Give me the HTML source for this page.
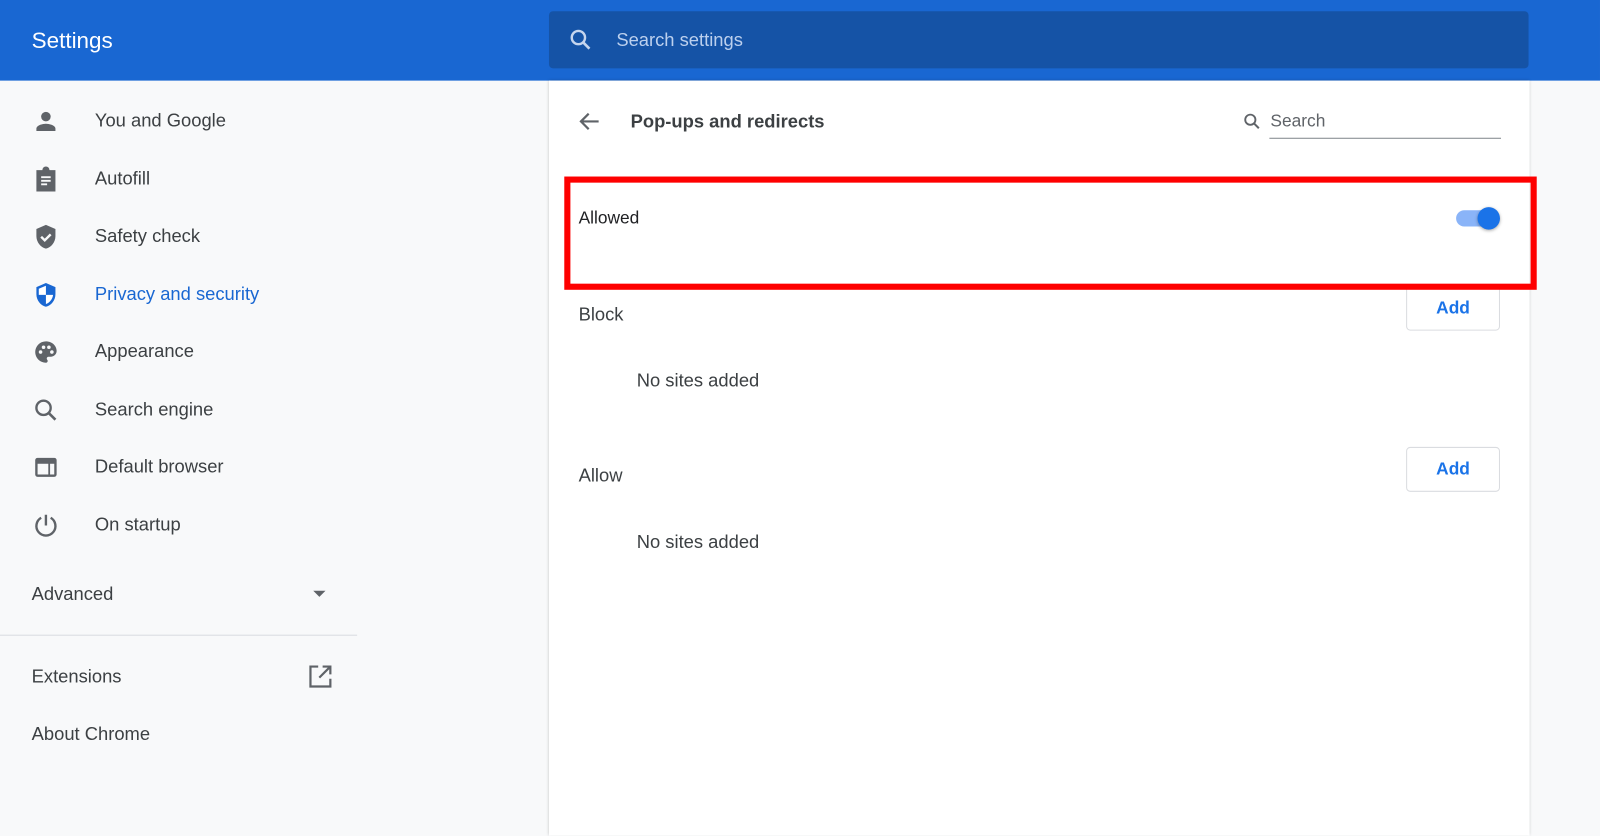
<!DOCTYPE html>
<html><head><style>
*{margin:0;padding:0;box-sizing:border-box}
html,body{width:1600px;height:813px;overflow:hidden;background:#f8f9fa}
#w{position:absolute;left:0;top:0;width:1568px;height:800px;transform:scale(1.0204);transform-origin:0 0;font-family:"Liberation Sans",sans-serif;color:#3c4043}
.hdr{position:absolute;left:0;top:0;width:1568px;height:79px;background:#1967d2}
.hdr .t{position:absolute;left:31px;top:27px;color:#fff;font-size:22px}
.sb{position:absolute;left:538px;top:11px;width:960px;height:56px;background:#1553a6;border-radius:4px}
.sb span{position:absolute;left:66px;top:18px;color:#bcd0ee;font-size:18px}
.nav{position:absolute;left:0;font-size:18px;color:#3c4043}
.nav svg{position:absolute;left:31px;top:-3px}
.nav span{position:absolute;left:93px;top:0;white-space:nowrap}
.card{position:absolute;left:538px;top:79px;width:961px;height:740px;background:#fff;box-shadow:0 0 3px rgba(0,0,0,.25)}
.abs{position:absolute;white-space:nowrap}
.btn{position:absolute;left:1378px;width:92px;height:44px;border:1px solid #dadce0;border-radius:4px;color:#1a73e8;font-size:17px;font-weight:bold;text-align:center;line-height:42px;background:#fff}
</style></head><body><div id="w">
<div class="hdr"><div class="t">Settings</div>
<div class="sb"><svg style="position:absolute;left:18px;top:15px" width="26" height="26" viewBox="0 0 24 24"><circle cx="10" cy="10" r="6" fill="none" stroke="#c5d5ee" stroke-width="2.2"/><path d="M14.5 14.5L20 20" stroke="#c5d5ee" stroke-width="2.4"/></svg><span>Search settings</span></div></div>

<div class="nav" style="top:108px"><svg width="28" height="28" viewBox="0 0 24 24"><circle cx="12" cy="8" r="4" fill="#5f6368"/><path d="M4 20v-2c0-2.7 5.3-4 8-4s8 1.3 8 4v2z" fill="#5f6368"/></svg><span>You and Google</span></div>
<div class="nav" style="top:165px"><svg width="28" height="28" viewBox="0 0 24 24"><path d="M4 4h5a3 3 0 0 1 6 0h5v18H4z" fill="#5f6368"/><path d="M8 10h8M8 13h8M8 16h5" stroke="#f8f9fa" stroke-width="1.6"/></svg><span>Autofill</span></div>
<div class="nav" style="top:221px"><svg width="28" height="28" viewBox="0 0 24 24"><path d="M12 2l8 3.5v6c0 5-3.5 9.5-8 10.5-4.5-1-8-5.5-8-10.5v-6z" fill="#5f6368"/><path d="M8 12l3 3 5-5" stroke="#f8f9fa" stroke-width="2" fill="none"/></svg><span>Safety check</span></div>
<div class="nav" style="top:278px;color:#1967d2"><svg width="28" height="28" viewBox="0 0 24 24"><path d="M12 2l8 3.5v6c0 5-3.5 9.5-8 10.5-4.5-1-8-5.5-8-10.5v-6z" fill="#1967d2"/><path d="M12 4.3v7.7H6V6.8zM12 12h6c-.4 3.6-3 6.8-6 7.7z" fill="#fff"/></svg><span>Privacy and security</span></div>
<div class="nav" style="top:334px"><svg width="28" height="28" viewBox="0 0 24 24"><path d="M12 3a9 9 0 0 0 0 18c.8 0 1.5-.7 1.5-1.5 0-.4-.2-.7-.4-1-.2-.3-.4-.6-.4-1 0-.8.7-1.5 1.5-1.5H16a5 5 0 0 0 5-5c0-4.4-4-8-9-8z" fill="#5f6368"/><circle cx="7.5" cy="12" r="1.5" fill="#f8f9fa"/><circle cx="10" cy="8" r="1.5" fill="#f8f9fa"/><circle cx="14.5" cy="8" r="1.5" fill="#f8f9fa"/><circle cx="17" cy="12" r="1.5" fill="#f8f9fa"/></svg><span>Appearance</span></div>
<div class="nav" style="top:391px"><svg width="28" height="28" viewBox="0 0 24 24"><circle cx="10" cy="10" r="6" fill="none" stroke="#5f6368" stroke-width="2"/><path d="M14.5 14.5L20 20" stroke="#5f6368" stroke-width="2.2"/></svg><span>Search engine</span></div>
<div class="nav" style="top:447px"><svg width="28" height="28" viewBox="0 0 24 24"><rect x="3" y="4" width="18" height="16" rx="2" fill="#5f6368"/><rect x="5" y="9" width="9" height="9" fill="#f8f9fa"/><rect x="15.5" y="9" width="3.5" height="9" fill="#f8f9fa"/></svg><span>Default browser</span></div>
<div class="nav" style="top:504px"><svg width="28" height="28" viewBox="0 0 24 24"><path d="M8 5.5a8 8 0 1 0 8 0" fill="none" stroke="#5f6368" stroke-width="2"/><path d="M12 3v9" stroke="#5f6368" stroke-width="2"/></svg><span>On startup</span></div>
<div class="abs" style="left:31px;top:572px;font-size:18px">Advanced</div>
<svg class="abs" style="left:306px;top:578px" width="14" height="8"><path d="M1 1h12l-6 6z" fill="#5f6368"/></svg>
<div class="abs" style="left:0;top:622px;width:350px;height:1px;background:#dadce0"></div>
<div class="abs" style="left:31px;top:653px;font-size:18px">Extensions</div>
<svg class="abs" style="left:301px;top:650px" width="26" height="26" viewBox="0 0 24 24"><path d="M10 3H3v18h18v-7" fill="none" stroke="#5f6368" stroke-width="2"/><path d="M14 3h7v7M21 3L11 13" fill="none" stroke="#5f6368" stroke-width="2"/></svg>
<div class="abs" style="left:31px;top:709px;font-size:18px">About Chrome</div>

<div class="card"></div>
<svg class="abs" style="left:565px;top:106px" width="26" height="26" viewBox="0 0 24 24"><path d="M20 12H5M11 5l-7 7 7 7" fill="none" stroke="#5f6368" stroke-width="2"/></svg>
<div class="abs" style="left:618px;top:109px;font-size:18px;font-weight:bold;color:#3c4043">Pop-ups and redirects</div>
<svg class="abs" style="left:1217px;top:109px" width="20" height="20" viewBox="0 0 24 24"><circle cx="10" cy="10" r="6" fill="none" stroke="#5f6368" stroke-width="2.2"/><path d="M14.5 14.5L20 20" stroke="#5f6368" stroke-width="2.4"/></svg>
<div class="abs" style="left:1245px;top:109px;font-size:17px;color:#5f6368">Search</div>
<div class="abs" style="left:1244px;top:135px;width:227px;height:1px;background:#80868b"></div>
<div class="abs" style="left:567px;top:204px;font-size:17px;color:#202124">Allowed</div>
<div class="abs" style="left:1427px;top:206px;width:36px;height:16px;border-radius:8px;background:#8ab4f8"></div>
<div class="abs" style="left:1448px;top:203px;width:22px;height:22px;border-radius:50%;background:#1a73e8;box-shadow:0 1px 3px rgba(0,0,0,.35)"></div>
<div class="btn" style="top:280px">Add</div>
<div class="abs" style="left:553px;top:173px;width:953px;height:111px;border:6px solid #fe0000"></div>
<div class="abs" style="left:567px;top:298px;font-size:18px">Block</div>
<div class="abs" style="left:624px;top:363px;font-size:18px">No sites added</div>
<div class="abs" style="left:567px;top:456px;font-size:18px">Allow</div>
<div class="btn" style="top:438px">Add</div>
<div class="abs" style="left:624px;top:521px;font-size:18px">No sites added</div>
</div></body></html>
